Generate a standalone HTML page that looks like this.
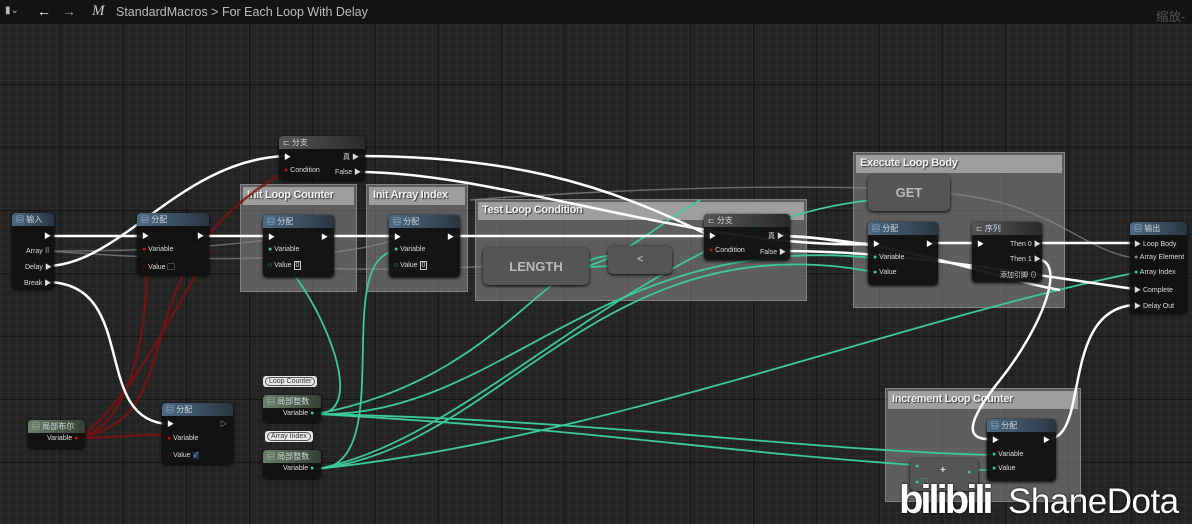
<!DOCTYPE html>
<html><head><meta charset="utf-8"><style>
*{margin:0;padding:0;box-sizing:border-box}
body{width:1192px;height:524px;overflow:hidden;background:#242424;font-family:"Liberation Sans","Noto Sans CJK SC",sans-serif;position:relative}
#grid{position:absolute;left:0;top:24px;width:1192px;height:500px;
background-image:linear-gradient(#161616 1px,transparent 1px),linear-gradient(90deg,#161616 1px,transparent 1px),linear-gradient(#2b2b2b 1px,transparent 1px),linear-gradient(90deg,#2b2b2b 1px,transparent 1px);
background-size:63px 63px,63px 63px,8px 8px,8px 8px;background-position:0 -3px,-3px 0,0 0,0 0}
#top{position:absolute;left:0;top:0;width:1192px;height:24px;background:#131313;color:#bdbdbd;font-size:12.5px}
.cm{position:absolute;background:rgba(140,140,140,.55);border:1px solid rgba(170,170,170,.5)}
.cm .h{height:18px;background:#9e9e9e;color:#f2f2f2;font-size:11px;letter-spacing:-0.3px;font-weight:bold;padding:2px 4px;text-shadow:1px 1px 1px #333;margin:2px;white-space:nowrap;overflow:hidden}
.n{position:absolute;background:rgba(16,16,16,.94);border-radius:4px;box-shadow:0 1px 3px #000;color:#ddd;font-size:7px}
.n .t{height:13px;border-radius:4px 4px 0 0;background:linear-gradient(90deg,#4d6a85,#2a3540);color:#cfd8e0;padding:1px 4px;font-size:8px}
.n .t.g{background:linear-gradient(90deg,#6a806a,#344034)}
.n .t.s{background:linear-gradient(90deg,#555,#2a2a2a)}
.r{position:absolute;font-size:7px;color:#ddd;white-space:nowrap}
.pill{position:absolute;background:#555;border-radius:5px;box-shadow:0 1px 3px #000;color:#bbb;font-weight:bold;text-align:center}
.lbl{position:absolute;background:#e8e8e8;border-radius:3px;font-size:7px;color:#333;padding:1px 2px}
.lbl span{border:1px solid #555;border-radius:6px;padding:0 3px;display:inline-block}
</style></head><body>
<div id="grid"></div>
<div id="top">
<span style="position:absolute;left:5px;top:5px;font-size:10px">▮⌄</span>
<span style="position:absolute;left:37px;top:3px;font-size:14px;color:#fff;font-weight:bold">←</span>
<span style="position:absolute;left:62px;top:3px;font-size:14px;color:#999;font-weight:bold">→</span>
<span style="position:absolute;left:92px;top:3px;font-size:15px;font-style:italic;font-family:'Liberation Serif',serif;color:#ccc">M</span>
<span style="position:absolute;left:116px;top:5px">StandardMacros &gt; For Each Loop With Delay</span>
<span style="position:absolute;left:1156px;top:6px;color:#555">缩放-</span>
</div>

<div class="cm" style="left:240px;top:184px;width:117px;height:108px"><div class="h">Init Loop Counter</div></div>
<div class="cm" style="left:366px;top:184px;width:102px;height:108px"><div class="h">Init Array Index</div></div>
<div class="cm" style="left:475px;top:199px;width:332px;height:102px"><div class="h">Test Loop Condition</div></div>
<div class="cm" style="left:853px;top:152px;width:212px;height:156px"><div class="h">Execute Loop Body</div></div>
<div class="cm" style="left:885px;top:388px;width:196px;height:114px"><div class="h">Increment Loop Counter</div></div>

<svg width="1192" height="524" style="position:absolute;left:0;top:0" fill="none">
<g stroke="#7a1212" stroke-width="2.5" opacity=".85">
<path d="M75 438 C150 430,150 250,145 250"/>
<path d="M75 438 C200 420,110 270,285 172"/>
<path d="M75 438 C130 438,160 430,168 439"/>
<path d="M75 438 C120 420,180 300,210 250"/>
</g>
<g stroke="#8a8a8a" stroke-width="1.5" opacity=".7">
<path d="M46 251 C150 251,200 248,268 240"/>
<path d="M46 251 C150 258,300 268,395 240"/>
<path d="M300 268 C400 270,420 270,490 266"/>
<path d="M470 200 C600 190,750 185,870 188"/>
<path d="M940 193 C1050 200,1080 250,1134 258"/>
</g>
<g stroke="#3cc99b" stroke-width="1.8">
<path d="M316 414 C380 414,300 260,268 251"/>
<path d="M316 469 C400 469,330 260,395 251"/>
<path d="M316 414 C500 380,550 250,615 256"/>
<path d="M316 414 C500 420,600 230,874 258"/>
<path d="M316 469 C500 450,600 220,874 272"/>
<path d="M316 469 C480 440,650 220,874 200"/>
<path d="M316 414 C600 430,700 450,915 465"/>
<path d="M316 414 C600 420,800 450,992 455"/>
<path d="M316 469 C600 440,900 320,1134 273"/>
<path d="M582 267 C600 267,600 266,615 266"/>
<path d="M975 470 C985 470,985 470,992 470"/>
<path d="M582 267 C620 260,650 230,700 200"/>
</g>
<g stroke="#fff" stroke-width="2.5">
<path d="M46 236 L142 236"/>
<path d="M46 266 C120 266,180 160,285 156"/>
<path d="M46 282 C140 282,90 420,168 424"/>
<path d="M202 236 L268 236"/>
<path d="M326 236 L395 236"/>
<path d="M452 236 C600 236,650 236,710 236"/>
<path d="M358 156 C500 156,600 180,710 236"/>
<path d="M358 172 C500 172,700 250,874 244"/>
<path d="M783 236 C820 236,840 244,874 244"/>
<path d="M783 251 C900 251,1000 270,1134 289"/>
<path d="M932 243 L977 243"/>
<path d="M1035 243 L1134 243"/>
<path d="M1035 259 C1070 259,1040 330,1000 380 C960 430,970 440,992 439"/>
<path d="M1048 439 C1090 439,1060 310,1134 305"/>
<path d="M783 236 C900 240,1000 280,1060 290"/>
</g>
</svg>

<div class="n" style="left:12px;top:213px;width:42px;height:76px"><div class="t">▤ 输入</div>
<div class="r" style="left:32px;top:18px;color:#fff">▶</div>
<div class="r" style="left:14px;top:34px">Array ⠿</div>
<div class="r" style="left:13px;top:49px">Delay ▶</div>
<div class="r" style="left:12px;top:65px">Break ▶</div></div>

<div class="n" style="left:137px;top:213px;width:72px;height:62px"><div class="t">▤ 分配</div>
<div class="r" style="left:5px;top:18px;color:#fff">▶</div><div class="r" style="left:60px;top:18px;color:#fff">▶</div>
<div class="r" style="left:5px;top:33px"><span style="color:#b11">●</span> Variable</div>
<div class="r" style="left:5px;top:49px"><span style="color:#b11">○</span> Value ▢</div></div>

<div class="n" style="left:279px;top:136px;width:86px;height:44px"><div class="t s">⊏ 分支</div>
<div class="r" style="left:5px;top:16px;color:#fff">▶</div><div class="r" style="left:64px;top:16px">真 ▶</div>
<div class="r" style="left:5px;top:31px"><span style="color:#b11">●</span> Condition</div><div class="r" style="left:56px;top:31px">False ▶</div></div>

<div class="n" style="left:263px;top:215px;width:71px;height:62px"><div class="t">▤ 分配</div>
<div class="r" style="left:5px;top:17px;color:#fff">▶</div><div class="r" style="left:58px;top:17px;color:#fff">▶</div>
<div class="r" style="left:5px;top:31px"><span style="color:#3cc99b">●</span> Variable</div>
<div class="r" style="left:5px;top:47px"><span style="color:#3cc99b">○</span> Value <span style="border:1px solid #ccc;padding:0 1px">0</span></div></div>

<div class="n" style="left:389px;top:215px;width:71px;height:62px"><div class="t">▤ 分配</div>
<div class="r" style="left:5px;top:17px;color:#fff">▶</div><div class="r" style="left:58px;top:17px;color:#fff">▶</div>
<div class="r" style="left:5px;top:31px"><span style="color:#3cc99b">●</span> Variable</div>
<div class="r" style="left:5px;top:47px"><span style="color:#3cc99b">○</span> Value <span style="border:1px solid #ccc;padding:0 1px">0</span></div></div>

<div class="pill" style="left:483px;top:248px;width:106px;height:37px;font-size:13px;line-height:37px">LENGTH</div>
<div class="pill" style="left:608px;top:246px;width:64px;height:28px;font-size:10px;line-height:28px">&lt;</div>

<div class="n" style="left:704px;top:214px;width:86px;height:46px"><div class="t s">⊏ 分支</div>
<div class="r" style="left:5px;top:17px;color:#fff">▶</div><div class="r" style="left:64px;top:17px">真 ▶</div>
<div class="r" style="left:5px;top:33px"><span style="color:#b11">●</span> Condition</div><div class="r" style="left:56px;top:33px">False ▶</div></div>

<div class="pill" style="left:868px;top:175px;width:82px;height:36px;font-size:13px;line-height:36px">GET</div>

<div class="n" style="left:868px;top:222px;width:70px;height:63px"><div class="t">▤ 分配</div>
<div class="r" style="left:5px;top:17px;color:#fff">▶</div><div class="r" style="left:58px;top:17px;color:#fff">▶</div>
<div class="r" style="left:5px;top:32px"><span style="color:#3cc99b">●</span> Variable</div>
<div class="r" style="left:5px;top:47px"><span style="color:#3cc99b">●</span> Value</div></div>

<div class="n" style="left:972px;top:222px;width:70px;height:60px"><div class="t s">⊏ 序列</div>
<div class="r" style="left:5px;top:17px;color:#fff">▶</div><div class="r" style="left:38px;top:17px">Then 0 ▶</div>
<div class="r" style="left:38px;top:32px">Then 1 ▶</div>
<div class="r" style="left:28px;top:48px">添加引脚 ⊙</div></div>

<div class="n" style="left:1130px;top:222px;width:57px;height:91px"><div class="t">▤ 输出</div>
<div class="r" style="left:4px;top:17px">▶ Loop Body</div>
<div class="r" style="left:4px;top:32px"><span style="color:#888">●</span> Array Element</div>
<div class="r" style="left:4px;top:47px"><span style="color:#3cc99b">●</span> Array Index</div>
<div class="r" style="left:4px;top:63px">▶ Complete</div>
<div class="r" style="left:4px;top:79px">▶ Delay Out</div></div>

<div class="n" style="left:28px;top:420px;width:57px;height:28px"><div class="t g">▤ 局部布尔</div>
<div class="r" style="left:19px;top:15px">Variable <span style="color:#c11">●</span></div></div>

<div class="n" style="left:162px;top:403px;width:71px;height:61px"><div class="t">▤ 分配</div>
<div class="r" style="left:5px;top:16px;color:#fff">▶</div><div class="r" style="left:58px;top:16px">▷</div>
<div class="r" style="left:5px;top:32px"><span style="color:#b11">●</span> Variable</div>
<div class="r" style="left:5px;top:47px"><span style="color:#b11">○</span> Value <span style="background:#1d3550;color:#9cf;padding:0 1px">✓</span></div></div>

<div class="lbl" style="left:263px;top:376px"><span>Loop Counter</span></div>
<div class="n" style="left:263px;top:395px;width:58px;height:27px"><div class="t g">▤ 局部整数</div>
<div class="r" style="left:20px;top:15px">Variable <span style="color:#3cc99b">●</span></div></div>
<div class="lbl" style="left:265px;top:431px"><span>Array Index</span></div>
<div class="n" style="left:263px;top:450px;width:58px;height:28px"><div class="t g">▤ 局部整数</div>
<div class="r" style="left:20px;top:15px">Variable <span style="color:#3cc99b">●</span></div></div>

<div class="pill" style="left:910px;top:459px;width:68px;height:32px"><div class="r" style="left:5px;top:4px;color:#3cc99b">●</div><div class="r" style="left:5px;top:18px;color:#3cc99b">● ▢</div><div class="r" style="left:30px;top:6px;font-size:10px">+</div><div class="r" style="left:57px;top:10px;color:#3cc99b">●</div></div>

<div class="n" style="left:987px;top:419px;width:69px;height:62px"><div class="t">▤ 分配</div>
<div class="r" style="left:5px;top:16px;color:#fff">▶</div><div class="r" style="left:56px;top:16px;color:#fff">▶</div>
<div class="r" style="left:5px;top:32px"><span style="color:#3cc99b">●</span> Variable</div>
<div class="r" style="left:5px;top:46px"><span style="color:#3cc99b">●</span> Value</div></div>

<div style="position:absolute;left:899px;top:476px;color:#fff;font-size:40px;line-height:48px;font-weight:bold;letter-spacing:-3px;text-shadow:0 0 2px #000">bilibili</div>
<div style="position:absolute;left:1008px;top:480px;color:#fff;font-size:35px;line-height:44px;letter-spacing:-0.5px;text-shadow:0 0 2px #000">ShaneDota</div>
</body></html>
